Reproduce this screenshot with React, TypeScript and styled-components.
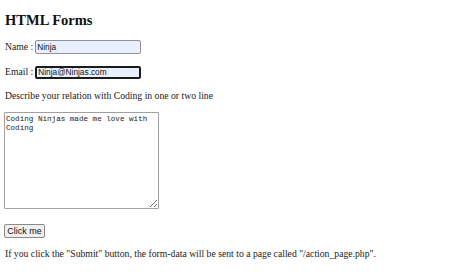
import React from "react";
import styled, { createGlobalStyle } from "styled-components";

const Global = createGlobalStyle`
  html, body { margin: 0; padding: 0; background: #ffffff; }
  body { font-family: "Liberation Serif", "Times New Roman", serif; color: #1a1a1a; }
`;

const Page = styled.div`
  display: flow-root;
  padding: 11px 5px 0 5px;
`;

const Title = styled.h2`
  margin: 0;
  font-size: 14.5px;
  line-height: 18px;
  font-weight: bold;
  color: #111;
`;

const Form = styled.form`
  display: flex;
  flex-direction: column;
  align-items: flex-start;
  margin-top: 11px;
`;

const Row = styled.div<{ $gap?: number }>`
  display: flex;
  align-items: center;
  height: 14px;
  margin-bottom: ${(p) => p.$gap ?? 11}px;
`;

const Label = styled.label`
  font-size: 9.7px;
  line-height: 14px;
  white-space: pre;
  margin-right: 2px;
`;

const Field = styled.input<{ $focused?: boolean }>`
  box-sizing: border-box;
  width: 106px;
  height: ${(p) => (p.$focused ? 13 : 14)}px;
  margin: 0;
  padding: 0 1px;
  font-family: "Liberation Sans", Arial, sans-serif;
  font-size: 8.3px;
  color: #111;
  background: #e8f0fe;
  border: ${(p) => (p.$focused ? "2px solid #1b1b1b" : "1px solid #8f8f9d")};
  border-radius: 2px;
  outline: none;
`;

const Prompt = styled.p`
  margin: 0 0 9px 0;
  font-size: 9.7px;
  line-height: 14px;
`;

const Area = styled.textarea`
  box-sizing: border-box;
  width: 155px;
  height: 97px;
  margin: 0 0 0 -1px;
  padding: 2px 2px 2px 1px;
  font-family: "Liberation Mono", "DejaVu Sans Mono", monospace;
  font-size: 7.6px;
  line-height: 9px;
  color: #222;
  border: 1px solid #a0a0a0;
  border-radius: 1px;
  resize: both;
  outline: none;
`;

const Button = styled.button`
  box-sizing: border-box;
  margin: 15px 0 0 -1px;
  width: 41px;
  height: 14px;
  padding: 0;
  font-family: "Liberation Sans", Arial, sans-serif;
  font-size: 9px;
  line-height: 12px;
  color: #111;
  background: #efefef;
  border: 1px solid #8a8a8a;
  border-radius: 2px;
`;

const Note = styled.p`
  margin: 9px 0 0 0;
  font-size: 9.7px;
  line-height: 14px;
  white-space: nowrap;
`;

export default function App() {
  return (
    <>
      <Global />
      <Page>
        <Title>HTML Forms</Title>
        <Form onSubmit={(e) => e.preventDefault()}>
          <Row>
            <Label htmlFor="name">Name :</Label>
            <Field id="name" type="text" defaultValue="Ninja" />
          </Row>
          <Row $gap={10}>
            <Label htmlFor="email">Email :</Label>
            <Field id="email" type="text" defaultValue="Ninja@Ninjas.com" $focused />
          </Row>
          <Prompt>Describe your relation with Coding in one or two line</Prompt>
          <Area defaultValue="Coding Ninjas made me love with Coding" />
          <Button type="submit">Click me</Button>
        </Form>
        <Note>
          If you click the "Submit" button, the form-data will be sent to a page called "/action_page.php".
        </Note>
      </Page>
    </>
  );
}
